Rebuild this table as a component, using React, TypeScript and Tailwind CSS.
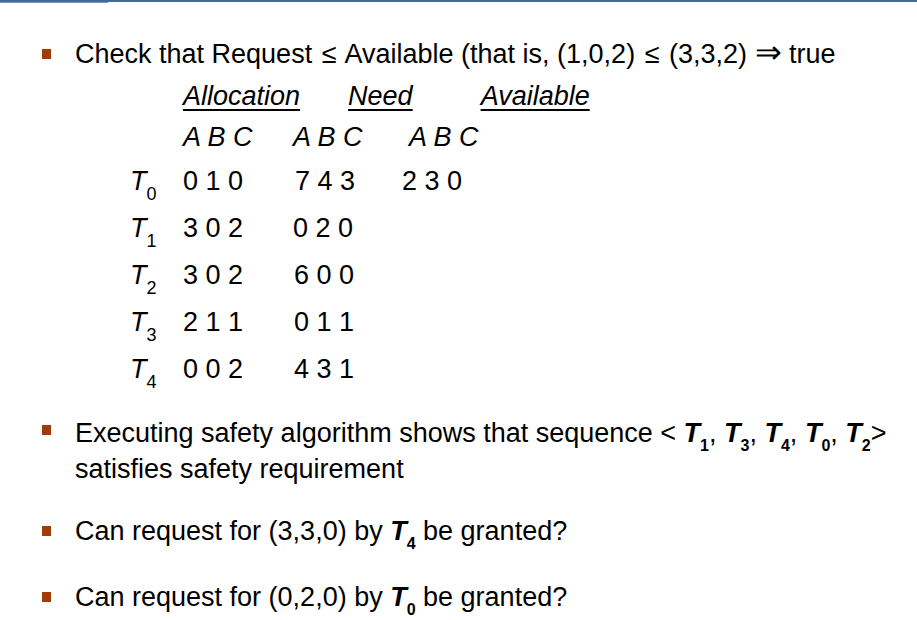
import React from 'react';

type Row = { t: string; alloc: string; need: string; avail?: string; needPad: number };

const rows: Row[] = [
	{ t: '0', alloc: '0 1 0', need: '7 4 3', avail: '2 3 0', needPad: 2 },
	{ t: '1', alloc: '3 0 2', need: '0 2 0', needPad: -4 },
	{ t: '2', alloc: '3 0 2', need: '6 0 0', needPad: 1 },
	{ t: '3', alloc: '2 1 1', need: '0 1 1', needPad: 1 },
	{ t: '4', alloc: '0 0 2', need: '4 3 1', needPad: 1 },
];

const Bullet = () => <span className="mt-[10px] block h-[10px] w-[9px] shrink-0 bg-[#a03c05]" />;

const T = ({ sub }: { sub: string }) => (
	<span className="font-bold italic">
		T<sub className="text-[16px] not-italic align-[-5px]">{sub}</sub>
	</span>
);

export default function App() {
	return (
		<div className="min-h-[620px] w-[917px] bg-white font-['Liberation_Sans',Arial,sans-serif] text-[27px] text-black">
			<div className="h-[2px] bg-[#44679c]" />
			<div className="h-[1px] w-[108px] bg-[#7393c4]" />

			<div className="pl-[42px] pt-[36px]">
				<div className="flex gap-[24px] leading-[30px]">
					<Bullet />
					<p>
						Check that Request <span className="px-[2px]">≤</span> Available (that is, (1,0,2){' '}
						<span className="px-[2px]">≤</span> (3,3,2){' '}
						<span className="font-['DejaVu_Sans'] text-[32px] font-extralight leading-[20px]">⇒</span> true
					</p>
				</div>

				<div className="mt-[12px] ml-[141px] italic leading-[30px]">
					<div className="flex">
						<span className="underline decoration-2 underline-offset-[4px]">Allocation</span>
						<span className="ml-[48px] underline decoration-2 underline-offset-[4px]">Need</span>
						<span className="ml-[68px] underline decoration-2 underline-offset-[4px]">Available</span>
					</div>
					<div className="mt-[11px] flex">
						<span className="w-[110px]">A B C</span>
						<span className="w-[116px]">A B C</span>
						<span>A B C</span>
					</div>
				</div>

				<div className="mt-[14px] ml-[88px]">
					{rows.map((r) => (
						<div key={r.t} className="flex h-[47px] leading-[30px]">
							<span className="w-[53px] italic">
								T<sub className="text-[18px] not-italic align-[-5px]">{r.t}</sub>
							</span>
							<span className="w-[110px]">{r.alloc}</span>
							<span className="w-[109px]" style={{ paddingLeft: r.needPad }}>{r.need}</span>
							{r.avail && <span>{r.avail}</span>}
						</div>
					))}
				</div>

				<div className="mt-[14px] flex gap-[24px] leading-[36px]">
					<Bullet />
					<p>
						Executing safety algorithm shows that sequence &lt; <T sub="1" />, <T sub="3" />, <T sub="4" />,{' '}
						<T sub="0" />, <T sub="2" />&gt;
						<br />
						satisfies safety requirement
					</p>
				</div>

				<div className="mt-[29px] flex gap-[24px] leading-[30px]">
					<Bullet />
					<p>Can request for (3,3,0) by <T sub="4" /> be granted?</p>
				</div>

				<div className="mt-[36px] flex gap-[24px] leading-[30px]">
					<Bullet />
					<p>Can request for (0,2,0) by <T sub="0" /> be granted?</p>
				</div>
			</div>
		</div>
	);
}
